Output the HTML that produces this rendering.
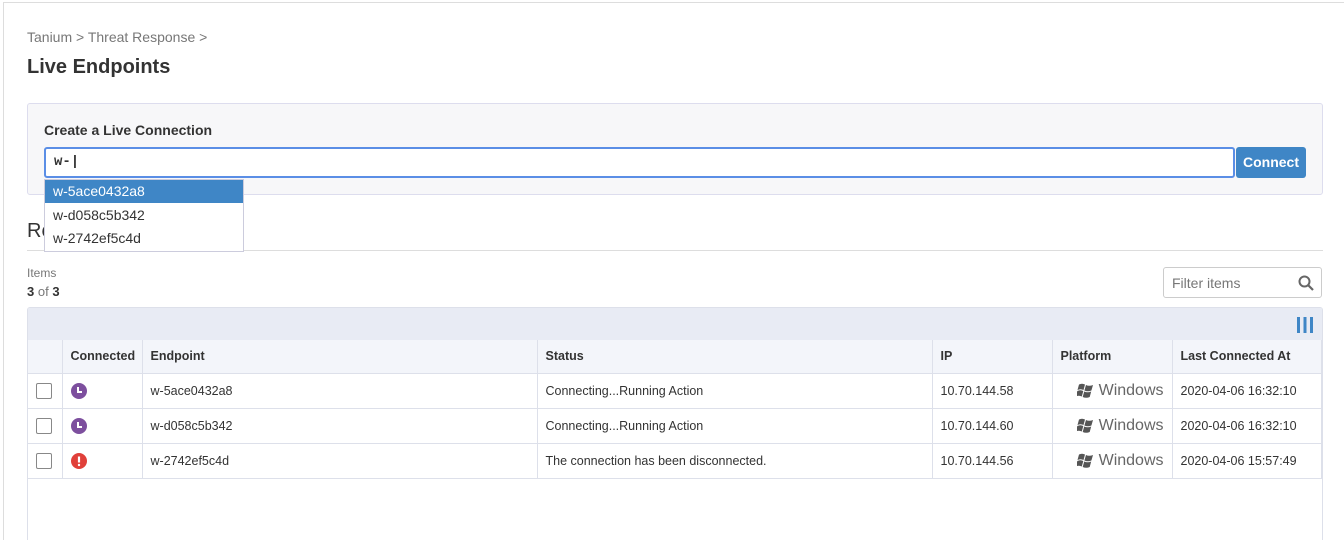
<!DOCTYPE html><html><head><style>
*{box-sizing:border-box;margin:0;padding:0}
html,body{width:1344px;height:540px;overflow:hidden}
body{background:#fff;font-family:"Liberation Sans",sans-serif;color:#333;position:relative}
.a{position:absolute}
td,th{border-right:1px solid #dde0ea;border-bottom:1px solid #dde0ea;font-size:12.5px;text-align:left;padding:0 8px;white-space:nowrap;vertical-align:middle}
th{background:#f3f5fa;font-weight:bold;height:33px}
td{height:35px}
table{border-collapse:collapse;table-layout:fixed}
.cb{width:16px;height:16px;border:1px solid #888;border-radius:2px;display:block}
svg{vertical-align:middle}
td svg.st{display:block}
.win{font-size:16px;color:#666}
</style></head><body>
<div class="a" style="left:3px;top:2px;width:1341px;height:538px;border-left:1px solid #ddd;border-top:1px solid #ddd"></div>
<div class="a" style="left:27px;top:29px;font-size:14px;color:#777">Tanium &gt; Threat Response &gt;</div>
<div class="a" style="left:27px;top:56px;font-size:20px;font-weight:bold;color:#333">Live Endpoints</div>
<div class="a" style="left:27px;top:103px;width:1296px;height:92px;border:1px solid #dde;border-radius:3px;background:#f7f7f9"></div>
<div class="a" style="left:44px;top:122px;font-size:14px;font-weight:bold">Create a Live Connection</div>
<div class="a" style="left:44px;top:147px;width:1191px;height:31px;border:2px solid #5b8ee6;border-radius:3px;background:#fff;font-family:'Liberation Mono',monospace;font-size:14px;padding:5px 8px;font-weight:bold">w-|</div>
<div class="a" style="left:1236px;top:147px;width:70px;height:31px;background:#3f86c6;border-radius:3px;color:#fff;font-weight:bold;font-size:14px;text-align:center;line-height:31px">Connect</div>
<div class="a" style="left:27px;top:220px;font-size:20px">Re</div>
<div class="a" style="left:27px;top:250px;width:1296px;border-top:1px solid #ddd"></div>
<div class="a" style="left:44px;top:179px;width:200px;height:73px;border:1px solid #ccd;background:#fff;font-size:14px">
<div style="background:#3f86c6;color:#fff;height:23px;line-height:23px;padding-left:8px">w-5ace0432a8</div>
<div style="height:24px;line-height:24px;padding-left:8px">w-d058c5b342</div>
<div style="height:24px;line-height:22px;padding-left:8px">w-2742ef5c4d</div></div>
<div class="a" style="left:27px;top:266px;font-size:12px;color:#777">Items</div>
<div class="a" style="left:27px;top:284px;font-size:13px"><b>3</b> <span style="color:#777">of</span> <b>3</b></div>
<div class="a" style="left:1163px;top:267px;width:159px;height:31px;border:1px solid #ccc;border-radius:3px;font-size:14px;color:#777;padding:7px 8px">Filter items
<svg class="a" style="right:7px;top:7px" width="16" height="16" viewBox="0 0 16 16"><circle cx="6.5" cy="6.5" r="5" fill="none" stroke="#666" stroke-width="2"/><path d="M10 10l5 5" stroke="#666" stroke-width="2.2"/></svg></div>
<div class="a" style="left:27px;top:307px;width:1296px;height:240px;border:1px solid #dde0ea;border-radius:3px;overflow:hidden">
<div style="height:32px;background:#e8ebf4;position:relative"><svg class="a" style="right:9px;top:9px" width="16" height="16"><rect x="0" y="0" width="3" height="16" fill="#3f86c6"/><rect x="6.5" y="0" width="3" height="16" fill="#3f86c6"/><rect x="13" y="0" width="3" height="16" fill="#3f86c6"/></svg></div>
<table style="width:1293px"><colgroup><col style="width:34px"><col style="width:80px"><col style="width:395px"><col style="width:395px"><col style="width:120px"><col style="width:120px"><col style="width:149px"></colgroup>
<tr><th></th><th>Connected</th><th>Endpoint</th><th>Status</th><th>IP</th><th>Platform</th><th>Last Connected At</th></tr>
<tr><td><span class="cb"></span></td><td><svg class="st" width="16" height="16"><circle cx="8" cy="8" r="8" fill="#7d4f9e"/><path d="M7 4v5h4" stroke="#fff" stroke-width="2" fill="none"/></svg></td><td>w-5ace0432a8</td><td>Connecting...Running Action</td><td>10.70.144.58</td><td style="text-align:right" class="win"><svg width="17" height="15" viewBox="0 0 17 15"><path d="M2 1.5q3-1.5 6 0l-1.5 5.5q-3-1.5-6 0zM9 2q3 1.5 7 0l-1.6 5.5q-3.5 1.5-7 0zM.3 8q3-1.5 6 0l-1.5 5.5q-3-1.5-6 0zM7.2 8.5q3.5 1.5 7 0l-1.5 5.5q-3.5 1.5-7 0z" fill="#555"/></svg> Windows</td><td>2020-04-06 16:32:10</td></tr>
<tr><td><span class="cb"></span></td><td><svg class="st" width="16" height="16"><circle cx="8" cy="8" r="8" fill="#7d4f9e"/><path d="M7 4v5h4" stroke="#fff" stroke-width="2" fill="none"/></svg></td><td>w-d058c5b342</td><td>Connecting...Running Action</td><td>10.70.144.60</td><td style="text-align:right" class="win"><svg width="17" height="15" viewBox="0 0 17 15"><path d="M2 1.5q3-1.5 6 0l-1.5 5.5q-3-1.5-6 0zM9 2q3 1.5 7 0l-1.6 5.5q-3.5 1.5-7 0zM.3 8q3-1.5 6 0l-1.5 5.5q-3-1.5-6 0zM7.2 8.5q3.5 1.5 7 0l-1.5 5.5q-3.5 1.5-7 0z" fill="#555"/></svg> Windows</td><td>2020-04-06 16:32:10</td></tr>
<tr><td><span class="cb"></span></td><td><svg class="st" width="16" height="16"><circle cx="8" cy="8" r="8" fill="#e0403a"/><path d="M8 3.5v6" stroke="#fff" stroke-width="2.2"/><circle cx="8" cy="12" r="1.2" fill="#fff"/></svg></td><td>w-2742ef5c4d</td><td>The connection has been disconnected.</td><td>10.70.144.56</td><td style="text-align:right" class="win"><svg width="17" height="15" viewBox="0 0 17 15"><path d="M2 1.5q3-1.5 6 0l-1.5 5.5q-3-1.5-6 0zM9 2q3 1.5 7 0l-1.6 5.5q-3.5 1.5-7 0zM.3 8q3-1.5 6 0l-1.5 5.5q-3-1.5-6 0zM7.2 8.5q3.5 1.5 7 0l-1.5 5.5q-3.5 1.5-7 0z" fill="#555"/></svg> Windows</td><td>2020-04-06 15:57:49</td></tr>
</table></div>
</body></html>
